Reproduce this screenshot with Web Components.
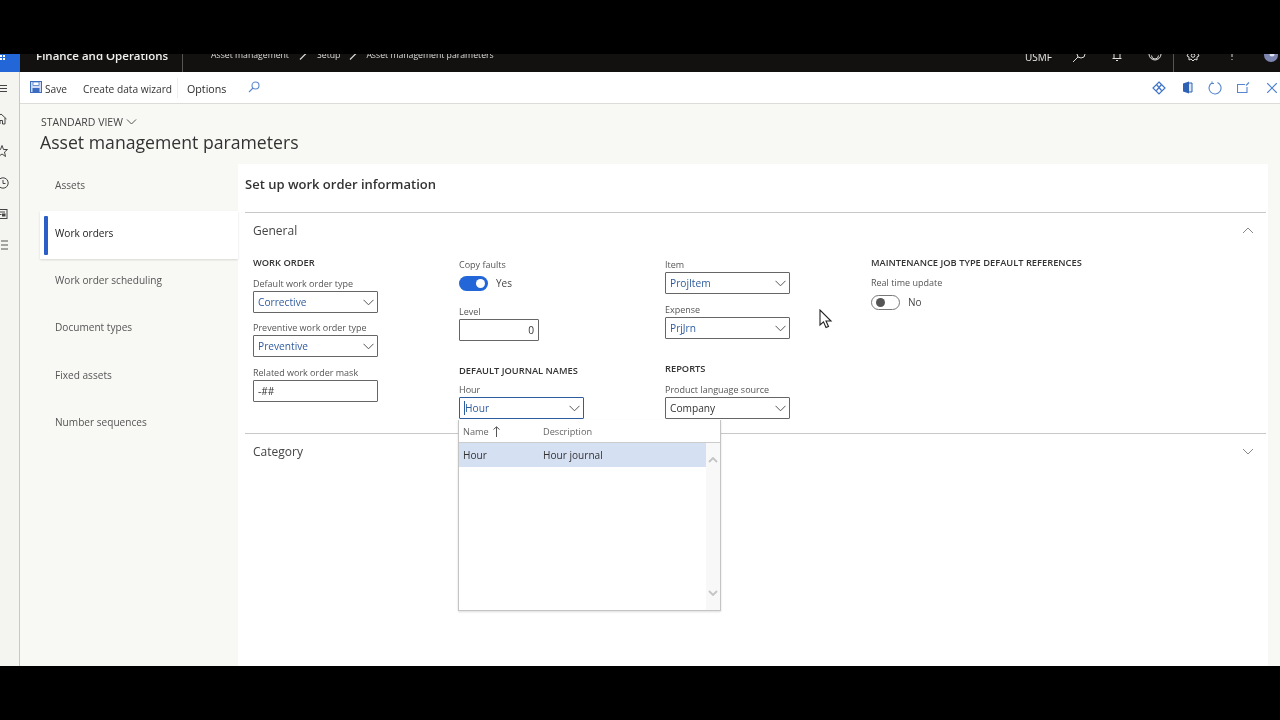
<!DOCTYPE html>
<html><head><meta charset="utf-8">
<style>
html,body{margin:0;padding:0;background:#000;overflow:hidden}
body{font-family:"Open Sans","Noto Sans",sans-serif}
</style></head><body>
<x-app></x-app>
<script>
const CH='<svg width="11" height="7" viewBox="0 0 11 7" fill="none" stroke="#555" stroke-width="1"><path d="M.5 .8 5.5 5.8 10.5 .8"/></svg>';
function def(name,css,html){
  customElements.define(name,class extends HTMLElement{
    connectedCallback(){
      if(this.shadowRoot)return;
      const s=this.attachShadow({mode:'open'});
      s.innerHTML='<style>'+css+'</style>'+(typeof html==='function'?html(this):html);
    }
  });
}
def('x-navbar',`
:host{display:flex;height:18px;background:#12110f;color:#e8e8e8;overflow:hidden;align-items:flex-start;position:relative}
.waffle{width:20px;height:18px;background:#2266d8;flex:none;display:flex;align-items:flex-start}
.brand{font-size:11.5px;font-weight:600;margin:-5px 0 0 16px;line-height:14px;width:146px;white-space:nowrap;color:#f0f0f0}
.sep{width:1px;height:18px;background:#555;flex:none}
.crumbs{display:flex;margin:-6px 0 0 28px;font-size:8.700px;line-height:14px;white-space:nowrap;color:#ddd;align-items:center}
.sp{flex:1}
.usmf{font-size:10px;line-height:14px;margin-top:-4px;width:43px}
.ic{width:38px;display:flex;justify-content:center;flex:none}
`,`<div class="waffle"><svg width="8" height="6" viewBox="0 0 8 6" fill="#fff" style="margin-top:1px"><rect width="2" height="2"/><rect x="3" width="2" height="2"/><rect y="3" width="2" height="2"/><rect x="3" y="3" width="2" height="2"/></svg></div>
<div class="brand">Finance and Operations</div><div class="sep"></div>
<div class="crumbs"><span>Asset management</span><svg width="28" height="14" viewBox="0 0 28 14"><path d="M11 11.500 17 5.500" stroke="#ddd" stroke-width="1.200"/></svg><span>Setup</span><svg width="26" height="14" viewBox="0 0 26 14"><path d="M10 11.500 16 5.500" stroke="#ddd" stroke-width="1.200"/></svg><span>Asset management parameters</span></div>
<div class="sp"></div>
<div class="usmf">USMF</div>
<div class="ic" style="margin-left:-8px"><svg width="14" height="10" viewBox="0 0 14 10" fill="none" stroke="#ddd"><path d="M1 8 6 3"/><circle cx="9" cy="0" r="4"/></svg></div>
<div class="ic"><svg width="12" height="8" viewBox="0 0 12 8" fill="none" stroke="#ddd"><path d="M3 0V4.500H9V0M1.500 4.500H10.500M5 6.500H7"/></svg></div>
<div class="ic"><svg width="14" height="8" viewBox="0 0 14 8" fill="none" stroke="#ddd"><path d="M1 0A6 6 0 0 0 13 0M3.500 1.500A3.500 3.500 0 0 0 10.500 1.500"/></svg></div>
<div class="sep" style="margin-left:-1px"></div>
<div class="ic"><svg width="14" height="8" viewBox="0 0 14 8" fill="none" stroke="#ddd"><path d="M2 0 1 2 3 3 3 6 5 5 7 7 9 5 11 6 11 3 13 2 12 0"/><circle cx="7" cy="1.500" r="1.800"/></svg></div>
<div class="ic" style="width:40px"><svg width="6" height="8" viewBox="0 0 6 8" fill="none" stroke="#ddd"><path d="M3 0V3M3 5V6"/></svg></div>
<div class="ic" style="margin-right:-10px"><svg width="14" height="10" viewBox="0 0 14 10"><circle cx="7" cy="1" r="7" fill="#7d86b0"/><circle cx="8" cy="0" r="2.500" fill="#dfe3ef"/></svg></div>`);

def('x-actionbar',`
:host{display:flex;height:31px;background:#fff;border-bottom:1px solid #dcdcd8;align-items:center;font-size:10.200px;color:#333;padding-left:10px;flex:none}
span{white-space:nowrap;line-height:14px;padding-top:2px}
.sp{flex:1}
.r{width:28px;display:flex;justify-content:center;flex:none}
.div{width:1px;height:20px;background:#eee;flex:none;margin:0 9px 0 -1px}
`,`<svg width="12" height="12" viewBox="0 0 12 12" style="margin-right:3px;margin-top:-1px;flex:none"><rect x=".5" y=".5" width="11" height="11" fill="#cfdcf3" stroke="#3b6cc0"/><rect x="3" y="1" width="6" height="3.500" fill="#fff" stroke="#3b6cc0" stroke-width=".7"/><rect x="2.500" y="7" width="7" height="4.500" fill="#3b6cc0"/></svg>
<span style="width:22px">Save</span><span style="margin-left:16px;width:95px">Create data wizard</span><div class="div"></div><span style="font-size:10.700px;color:#2b2b2b;width:61px">Options</span>
<svg width="12" height="12" viewBox="0 0 12 12" fill="none" stroke="#5b86cf" stroke-width="1.100" style="margin-top:-2px;flex:none"><circle cx="7.500" cy="4.500" r="3.500"/><path d="M5 7 1 11"/></svg>
<div class="sp"></div>
<div class="r"><svg width="14" height="14" viewBox="0 0 14 14" fill="none" stroke="#3f74c7" stroke-width="1.200"><path d="M7 1 13 7 7 13 1 7ZM4.500 3.500 9.500 9.500M9.500 3.500 4.500 9.500"/></svg></div>
<div class="r"><svg width="11" height="13" viewBox="0 0 11 13"><path d="M1 2.500 7 .5V12.500L1 10.500Z" fill="#2f62b5"/><path d="M7 2H10V11H7" fill="#dbe6f6" stroke="#2f62b5"/></svg></div>
<div class="r"><svg width="14" height="14" viewBox="0 0 14 14" fill="none" stroke="#5585cf" stroke-width="1.100"><path d="M9.500 1.500A6 6 0 1 1 4 1.800M4 .5V2.500H6"/></svg></div>
<div class="r"><svg width="13" height="12" viewBox="0 0 13 12" fill="none" stroke="#5585cf" stroke-width="1.100"><path d="M8 2.500H.5V10.500H10V5M9 3.500 12 .5"/></svg></div>
<div class="r" style="width:16px;margin-left:7px"><svg width="10" height="10" viewBox="0 0 10 10" fill="none" stroke="#4a7ed0" stroke-width="1.200"><path d="M0 0 10 10M10 0 0 10"/></svg></div>`);

def('x-rail',`
:host{display:flex;flex-direction:column;width:19px;border-right:1px solid #c8c8c4;background:#f4f4f1;overflow:hidden;flex:none}
svg{display:block;flex:none;margin-left:-4px}
`,`<svg style="margin-top:13px;margin-left:-1px" width="9" height="8" viewBox="0 0 9 8" stroke="#444" fill="none"><path d="M0 .5H8M0 3.500H8M0 6.500H8"/></svg>
<svg style="margin-top:20px;margin-left:-5px" width="12" height="12" viewBox="0 0 12 12" stroke="#444" fill="none"><path d="M.5 6 6 1 11.500 6M2.500 5V11H5V7.500H7.500V11H10V5"/></svg>
<svg style="margin-top:20px" width="12" height="12" viewBox="0 0 12 12" stroke="#444" fill="none"><path d="M6 .5 7.500 4.500H11.500L8.500 7 9.500 11.500 6 9 2.500 11.500 3.500 7 .5 4.500H4.500Z"/></svg>
<svg style="margin-top:20px;margin-left:-3px" width="12" height="12" viewBox="0 0 12 12" stroke="#444" fill="none"><circle cx="6" cy="6" r="5.200"/><path d="M6 3V6.500H8.500"/></svg>
<svg style="margin-top:19px" width="12" height="12" viewBox="0 0 12 12" stroke="#444" fill="none"><rect x=".5" y="1.500" width="10.500" height="9"/><path d="M2.500 4H9M2.500 6.500H5.500"/><rect x="6.500" y="6" width="2.500" height="2" fill="#444"/></svg>
<svg style="margin-top:20px" width="12" height="11" viewBox="0 0 12 11" stroke="#555" fill="none"><path d="M2 1H12M2 5H12M2 9H12" stroke-dasharray="2 1 8"/></svg>`);

def('x-sidetabs',`
:host{display:block;width:198px;margin-left:20px;flex:none;font-size:10.100px;color:#555}
.t{height:47.400px;box-sizing:border-box;display:flex;align-items:center;padding:0 0 5px 15px;white-space:nowrap;position:relative}
.on{background:#fff;color:#222;box-shadow:0 1px 2px #0002}
.on i{position:absolute;left:4px;top:5px;bottom:4px;width:4px;background:#2b5fc7;border-radius:1px}
`,`<div class="t">Assets</div><div class="t on"><i></i>Work orders</div><div class="t">Work order scheduling</div><div class="t">Document types</div><div class="t">Fixed assets</div><div class="t">Number sequences</div>`);

def('x-field',`
:host{display:block;font-size:9px;color:#555}
.l{height:15px;line-height:15px;white-space:nowrap}
.b{height:22px;box-sizing:border-box;border:1px solid #666;background:#fff;display:flex;align-items:center;padding:0 3px 0 4px;justify-content:space-between;font-size:10.200px;color:#2f5c9e;border-radius:1px}
.p{color:#333}
.n{color:#333;justify-content:flex-end;padding-right:4px}
.f{border-color:#2f5c9e}
.f span{border-left:1px solid #2f5c9e}
`,h=>{const v=h.getAttribute('value'),k=h.getAttribute('kind')||'',drop=!k.includes('n')&&!k.includes('t');
return `<div class="l">${h.getAttribute('label')}</div><div class="b ${k.includes('t')||k.includes('c')?'p':''} ${k.includes('n')?'n p':''} ${k.includes('f')?'f':''}"><span>${v}</span>${drop?CH:''}</div>`});

def('x-toggle',`
:host{display:flex;align-items:center;font-size:10px;color:#444;height:16px}
.s{width:29px;height:15px;box-sizing:border-box;border-radius:8px;display:flex;align-items:center;margin-right:8px;padding:0 3px}
.on{background:#2266d8;justify-content:flex-end}
.off{background:#fff;border:1px solid #777;justify-content:flex-start}
i{width:9px;height:9px;border-radius:50%;background:#fff}
.off i{background:#555;margin-left:1px}
`,h=>{const on=h.hasAttribute('on');return `<div class="s ${on?'on':'off'}"><i></i></div><span>${on?'Yes':'No'}</span>`});

def('x-heading',`
:host{display:block;font-size:9.300px;font-weight:600;color:#333;line-height:14px;white-space:nowrap}
`,`<slot></slot>`);

def('x-lookup',`
:host{position:absolute;left:458px;top:420px;width:263px;height:191px;box-sizing:border-box;background:#fff;border:1px solid #c4c4c4;border-top:0;box-shadow:0 1px 2px #0002;font-size:10.100px;color:#444;display:flex;flex-direction:column}
.h{height:23px;display:flex;align-items:center;border-bottom:1px solid #ccc;color:#666;font-size:9.200px;box-sizing:border-box;flex:none}
.h span:first-child{width:84px;padding-left:4px;box-sizing:border-box;display:flex;align-items:center;gap:4px}
.wrap{flex:1;display:flex}
.list{flex:1}
.row{height:24px;background:#d6e0f3;display:flex;align-items:center;color:#333}
.row span:first-child{width:84px;padding-left:4px;box-sizing:border-box}
.sb{width:14px;background:#f8f8f8;display:flex;flex-direction:column;justify-content:space-between;align-items:center;padding:14px 0;box-sizing:border-box}
`,`<div class="h"><span>Name <svg width="7" height="11" viewBox="0 0 7 11" fill="none" stroke="#555"><path d="M3.500 11V1M.5 3.500 3.500 .8 6.500 3.500"/></svg></span><span>Description</span></div>
<div class="wrap"><div class="list"><div class="row"><span>Hour</span><span>Hour journal</span></div></div>
<div class="sb"><svg width="10" height="6" viewBox="0 0 10 6" fill="none" stroke="#c4c4c4" stroke-width="1.800"><path d="M1 5 5 1 9 5"/></svg><svg width="10" height="6" viewBox="0 0 10 6" fill="none" stroke="#c4c4c4" stroke-width="1.800"><path d="M1 1 5 5 9 1"/></svg></div></div>`);

def('x-form',`
:host{display:block;background:#fff;flex:1;min-width:0;margin-right:12px;padding:0 2px 0 7px;color:#333}
h2{margin:0;font-size:13px;font-weight:600;color:#333;line-height:20px;height:49px;padding-top:10px;box-sizing:border-box;border-bottom:1px solid #c8c8c8;white-space:nowrap}
.sec{display:flex;justify-content:space-between;align-items:center;padding:0 12px 2px 8px;height:36px;box-sizing:border-box;font-size:12px;color:#444}
.sec span{font-weight:500}
.grid{display:grid;grid-template-columns:repeat(4,206px);padding-left:8px;height:184px;border-bottom:1px solid #c8c8c8;align-items:start}
.c{display:flex;flex-direction:column;width:125px;padding-top:8px}
.c4{width:auto}
.lb{font-size:9px;color:#555;line-height:14px}
`,`<h2>Set up work order information</h2>
<div class="sec"><span>General</span><svg width="12" height="7" viewBox="0 0 12 7" fill="none" stroke="#888"><path d="M1 6 6 1 11 6"/></svg></div>
<div class="grid">
<div class="c" style="padding-top:7px"><x-heading>WORK ORDER</x-heading>
 <x-field style="margin-top:6px" label="Default work order type" value="Corrective"></x-field>
 <x-field style="margin-top:7px" label="Preventive work order type" value="Preventive"></x-field>
 <x-field style="margin-top:8px" label="Related work order mask" value="-##" kind="t"></x-field></div>
<div class="c" style="padding-top:9px">
 <div class="lb" style="margin-bottom:3px">Copy faults</div>
 <x-toggle on></x-toggle>
 <x-field style="margin-top:13px;width:80px" label="Level" value="0" kind="n"></x-field>
 <x-heading style="margin-top:23px">DEFAULT JOURNAL NAMES</x-heading>
 <x-field style="margin-top:4px" label="Hour" value="Hour" kind="f"></x-field></div>
<div class="c">
 <x-field label="Item" value="ProjItem"></x-field>
 <x-field style="margin-top:8px" label="Expense" value="PrjJrn"></x-field>
 <x-heading style="margin-top:23px">REPORTS</x-heading>
 <x-field style="margin-top:6px" label="Product language source" value="Company" kind="c"></x-field></div>
<div class="c c4" style="padding-top:7px"><x-heading>MAINTENANCE JOB TYPE DEFAULT REFERENCES</x-heading>
 <div class="lb" style="margin:6px 0 4px">Real time update</div>
 <x-toggle></x-toggle></div>
</div>
<div class="sec" style="height:34px;padding-bottom:0"><span>Category</span><svg width="12" height="7" viewBox="0 0 12 7" fill="none" stroke="#888"><path d="M1 1 6 6 11 1"/></svg></div>`);

def('x-app',`
:host{display:flex;flex-direction:column;width:1280px;height:720px;background:#000;position:relative;overflow:hidden;font-family:"Open Sans","Noto Sans",sans-serif;filter:blur(.35px)}
.top{height:54px;flex:none}
.bot{height:54px;flex:none}
.mid{flex:1;display:flex;min-height:0}
.main{flex:1;display:flex;flex-direction:column;min-width:0}
.page{flex:1;background:#f8f8f5;display:flex;flex-direction:column;min-height:0}
.hd{height:60px;flex:none;padding:11px 0 0 20px;box-sizing:border-box}
.sv{font-size:10.500px;color:#444;line-height:14px;display:flex;align-items:center;gap:3px;padding-left:1px}
h1{margin:1px 0 0;font-size:17.650px;font-weight:500;color:#333;line-height:24px;white-space:nowrap}
.body{flex:1;display:flex;min-height:0}
.cursor{position:absolute;left:819px;top:309px}
`,`<div class="top"></div><x-navbar></x-navbar>
<div class="mid"><x-rail></x-rail><div class="main"><x-actionbar></x-actionbar>
<div class="page"><div class="hd"><div class="sv">STANDARD VIEW <svg width="11" height="6" viewBox="0 0 11 6" fill="none" stroke="#555"><path d="M1 .5 5.500 5 10 .5"/></svg></div><h1>Asset management parameters</h1></div>
<div class="body"><x-sidetabs></x-sidetabs><x-form></x-form></div></div></div></div>
<div class="bot"></div><x-lookup></x-lookup>
<svg class="cursor" width="14" height="20" viewBox="0 0 14 20"><path d="M1 1V16L4.500 12.800 7 18.500 9.500 17.500 7 12H12Z" fill="#fff" stroke="#222" stroke-width="1.100"/></svg>`);
</script></body></html>
